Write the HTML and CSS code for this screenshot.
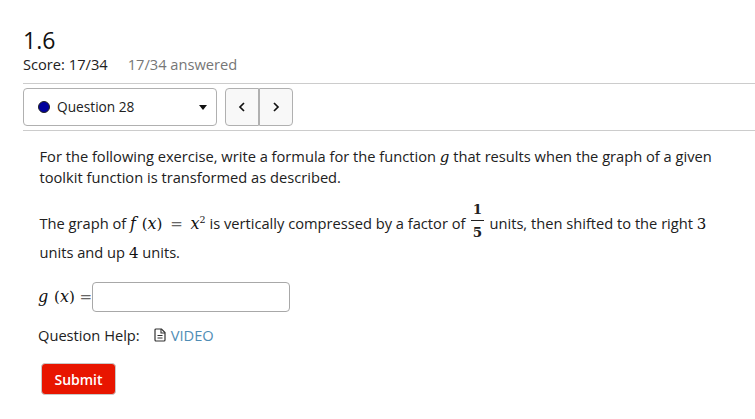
FILE: index.html
```html
<!DOCTYPE html>
<html lang="en">

<head>
    <meta charset="UTF-8">
    <title>1.6</title>
    <link rel="stylesheet" href="styles.css">
</head>

<body>
    <div class="page">
        <h1>1.6</h1>
        <div class="score">
            <span>Score: 17/34</span>
            <span class="answered">17/34 answered</span>
        </div>

        <div class="nav">
            <div class="select">
                <span class="dot"></span>
                <span class="select-label">Question 28</span>
                <span class="caret"></span>
            </div>
            <div class="arrows">
                <button class="arrow">
                    <svg width="8" height="10" viewBox="0 0 8 10"><path d="M6 1 2 5l4 4" fill="none" stroke="#111" stroke-width="1.7"/></svg>
                </button>
                <button class="arrow">
                    <svg width="8" height="10" viewBox="0 0 8 10"><path d="M2 1l4 4-4 4" fill="none" stroke="#111" stroke-width="1.7"/></svg>
                </button>
            </div>
        </div>

        <div class="question">
            <p class="intro">For the following exercise, write a formula for the function <span class="var">g</span> that results when the graph of a given toolkit function is transformed as described.</p>

            <p class="problem">The graph of <span class="math"><i class="fn">f</i> (<i>x</i>) <span class="rel">=</span> <i>x</i><sup>2</sup></span> is vertically compressed by a factor of
                <span class="frac"><span class="num">1</span><span class="den">5</span></span>
                units, then shifted to the right <span class="math">3</span> units and up <span class="math">4</span> units.</p>

            <div class="answer">
                <span class="math"><i class="fn">g</i> (<i>x</i>) <span class="rel rel-end">=</span></span>
                <input type="text" class="answer-input">
            </div>

            <div class="help">
                <span>Question Help:</span>
                <svg class="doc" width="12" height="14" viewBox="0 0 12 14">
                    <path d="M1 2a1 1 0 0 1 1-1h5.500L11 4.500V12a1 1 0 0 1-1 1H2a1 1 0 0 1-1-1z" fill="none" stroke="#333" stroke-width="1.2"/>
                    <path d="M7 1v4h4M3.500 7.500h5M3.500 10h5" fill="none" stroke="#333" stroke-width="1.1"/>
                </svg>
                <a class="video" href="#">VIDEO</a>
            </div>

            <button class="btn">Submit</button>
        </div>
    </div>
</body>

</html>
```

FILE: styles.css
```css
body {
    margin: 0;
    font-family: "Open Sans", sans-serif;
    font-size: 14.67px;
    color: #212121;
    background-color: #fff;
}

.page {
    padding: 27px 0 0 23px;
}

h1 {
    margin: 0;
    font-size: 23px;
    line-height: 26px;
    font-weight: 400;
    color: #111;
}

.score {
    display: flex;
    gap: 20px;
    margin-top: 2px;
    padding-bottom: 10px;
    line-height: 18px;
    border-bottom: 1px solid #ccc;
}

.answered {
    color: #767676;
}

.nav {
    display: flex;
    gap: 8px;
    padding: 4px 0;
    border-bottom: 1px solid #ccc;
}

.select {
    display: flex;
    align-items: center;
    width: 192px;
    height: 36px;
    border: 1px solid #b0b0b0;
    border-radius: 4px;
}

.dot {
    width: 12px;
    height: 12px;
    margin-left: 14px;
    border-radius: 50%;
    background-color: #00009c;
    border: 1px solid #222;
    box-sizing: border-box;
}

.select-label {
    flex: 1;
    margin-left: 7px;
    padding-bottom: 2px;
    font-size: 13.7px;
}

.caret {
    width: 0;
    height: 0;
    margin-right: 9px;
    border-left: 4px solid transparent;
    border-right: 4px solid transparent;
    border-top: 5px solid #111;
}

.arrows {
    display: flex;
    height: 38px;
}

.arrow {
    display: flex;
    align-items: center;
    justify-content: center;
    width: 34px;
    padding: 0;
    background-color: #f8f8f8;
    border: 1px solid #b0b0b0;
}

.arrow:first-child {
    border-radius: 4px 0 0 4px;
}

.arrow:last-child {
    border-radius: 0 4px 4px 0;
}

.question {
    padding: 15px 30px 0 15px;
}

.intro {
    margin: 0 0 0 1.5px;
    line-height: 20px;
}

.problem {
    margin: 22px 0 0 1.5px;
    line-height: 29px;
}

.var,
.math {
    font-family: "DejaVu Serif", serif;
    font-size: 15px;
    line-height: 20px;
    color: #111;
}

.var,
.math i {
    font-style: italic;
}

.math i {
    font-size: 16px;
}

.fn {
    margin-right: 1px;
}

.math sup {
    font-size: 9.5px;
    line-height: 0;
}

.rel {
    margin: 0 3px;
    color: #666;
}

.rel-end {
    margin: 0;
}

.frac {
    display: inline-flex;
    flex-direction: column;
    align-items: center;
    vertical-align: 15.5px;
    margin: -20px 1.5px -8px;
    font-family: "DejaVu Serif", serif;
    font-size: 13.5px;
    font-weight: 700;
    line-height: 21px;
}

.num {
    padding: 0 2px;
    border-bottom: 1px solid #212121;
}

.den {
    padding-top: 1px;
}

.answer {
    display: flex;
    align-items: center;
    gap: 0;
    margin-top: 15px;
}

.answer-input {
    width: 198px;
    height: 30px;
    padding: 0;
    border: 1px solid #a8a8a8;
    border-radius: 4px;
    box-sizing: border-box;
}

.help {
    display: flex;
    align-items: center;
    margin-top: 13px;
    line-height: 20px;
}

.doc {
    margin-left: 14px;
}

.video {
    margin-left: 5px;
    color: #4f8db5;
    text-decoration: none;
}

.btn {
    display: block;
    margin: 18px 0 0 3px;
    width: 75px;
    height: 32px;
    padding: 0;
    font-family: "Open Sans", sans-serif;
    font-size: 14px;
    font-weight: 600;
    color: #fff;
    background-color: #e81500;
    border: 1px solid #c9c9c9;
    border-radius: 4px;
}
```
